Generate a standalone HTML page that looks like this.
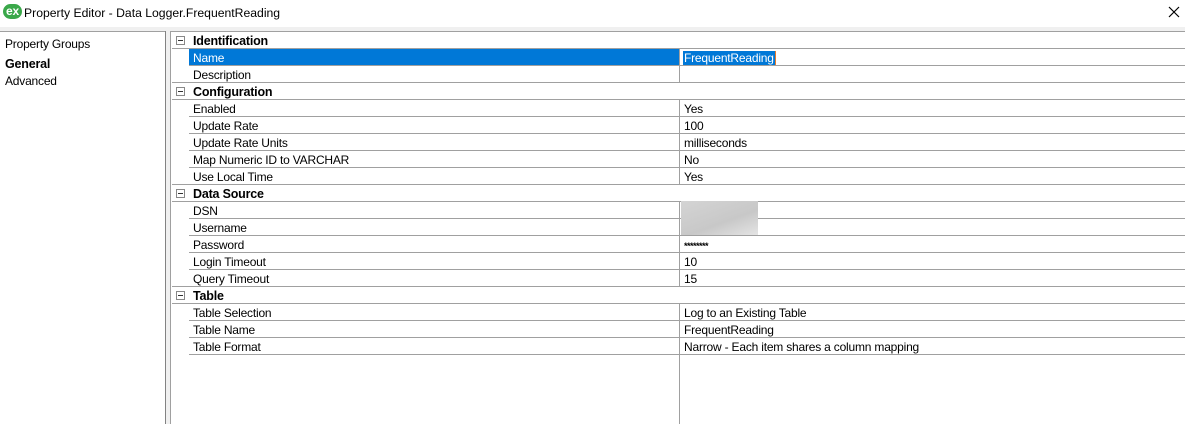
<!DOCTYPE html><html><head><style>
body{margin:0;width:1185px;height:424px;background:#fff;font-family:"Liberation Sans",sans-serif;font-size:12px;color:#000;position:relative;overflow:hidden;letter-spacing:-0.2px}
div{position:absolute;box-sizing:border-box}
.t{white-space:nowrap;line-height:17px}
.hl{height:1px;background:#a0a0a0}
</style></head><body>
<div style="left:3px;top:4px;width:19px;height:15px;background:#3aa84a;border-radius:8px;color:#fff;font-weight:bold;font-size:12px;line-height:15px;text-align:center">ex</div>
<div class="t" style="left:24px;top:4px;font-size:12.2px;line-height:18px;letter-spacing:0">Property Editor - Data Logger.FrequentReading</div>
<svg style="position:absolute;left:1168px;top:6px" width="12" height="12"><path d="M1 1L11 11M11 1L1 11" stroke="#000" stroke-width="1.2"/></svg>
<div style="left:0;top:27px;width:1185px;height:4px;background:#f0f0f0"></div>
<div style="left:0;top:31px;width:1185px;height:1px;background:#a0a0a0"></div>
<div style="left:165px;top:31px;width:1px;height:393px;background:#828282"></div>
<div style="left:166px;top:31px;width:4px;height:393px;background:#f0f0f0"></div>
<div style="left:170px;top:31px;width:1px;height:393px;background:#a0a0a0"></div>
<div class="t" style="left:5px;top:36px">Property Groups</div>
<div class="t" style="left:5px;top:56px;font-weight:bold;font-size:12.5px">General</div>
<div class="t" style="left:5px;top:73px">Advanced</div>
<div style="left:679px;top:32px;width:1px;height:392px;background:#a0a0a0"></div>
<div id="g"></div>
<script>
var rows=[["c","Identification"],["p","Name","FrequentReading"],["p","Description",""],["c","Configuration"],["p","Enabled","Yes"],["p","Update Rate","100"],["p","Update Rate Units","milliseconds"],["p","Map Numeric ID to VARCHAR","No"],["p","Use Local Time","Yes"],["c","Data Source"],["p","DSN",""],["p","Username",""],["p","Password","********"],["p","Login Timeout","10"],["p","Query Timeout","15"],["c","Table"],["p","Table Selection","Log to an Existing Table"],["p","Table Name","FrequentReading"],["p","Table Format","Narrow - Each item shares a column mapping"]];
var h="";
rows.forEach(function(r,i){var y=32+17*i;
if(r[0]=="c"){h+='<div style="left:171px;top:'+y+'px;width:1014px;height:16px;background:#fff"></div>';
h+='<div style="left:176px;top:'+(y+4)+'px;width:9px;height:9px;border:1px solid #888;background:#fff"></div><div style="left:178px;top:'+(y+8)+'px;width:5px;height:1px;background:#333"></div>';
h+='<div class="t" style="left:193px;top:'+(y+1)+'px;font-weight:bold;font-size:12.5px">'+r[1]+'</div>';}
else{if(i==1)h+='<div style="left:189px;top:'+y+'px;width:490px;height:16px;background:#0078d7"></div>';
h+='<div class="t" style="left:193px;top:'+(y+1)+'px;'+(i==1?'color:#fff':'')+'">'+r[1]+'</div>';
if(i==1)h+='<div class="t" style="left:683px;top:'+(y+2)+'px;background:#0078d7;color:#fff;line-height:14px;padding:0 1px;border-right:1px solid #e87a2c">'+r[2]+'</div>';
else h+='<div class="t" style="left:684px;top:'+(y+(r[1]=="Password"?2:1))+'px;'+(r[1]=="Password"?'font-size:9px;font-weight:bold;letter-spacing:-0.5px':'')+'">'+r[2]+'</div>';}
var next=rows[i+1];var full=(r[0]=="c")||(next&&next[0]=="c");
h+='<div class="hl" style="left:'+(full?172:189)+'px;top:'+(y+16)+'px;width:'+(1185-(full?172:189))+'px"></div>';
});
h+='<div style="left:681px;top:201px;width:77px;height:34px;background:linear-gradient(160deg,#d4d4d4,#c8c8c8 60%,#e4e4e4)"></div>';
document.getElementById("g").outerHTML=h;
</script>
</body></html>
